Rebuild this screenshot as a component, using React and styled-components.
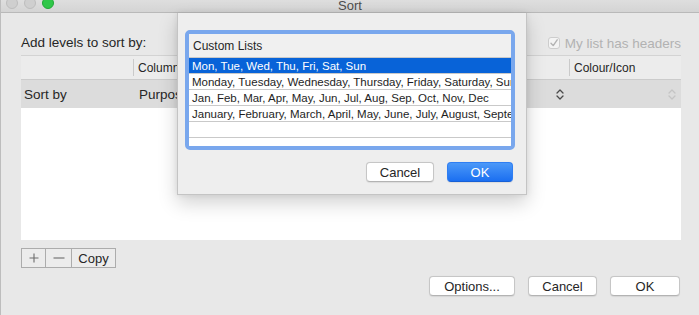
import React from 'react';
import styled, { createGlobalStyle } from 'styled-components';

const GlobalStyle = createGlobalStyle`
  * { box-sizing: border-box; }
  body {
    margin: 0;
    background: #e8e8e8;
    font-family: "Liberation Sans", Arial, sans-serif;
    color: #262626;
  }
`;

const Window = styled.div`
  position: relative;
  width: 699px;
  height: 315px;
  overflow: hidden;
  background: #e8e8e8;
  border-left: 1px solid #bdbdbd;
`;

const TitleBar = styled.div`
  height: 13px;
  display: grid;
  grid-template-columns: 1fr auto 1fr;
  align-items: start;
  background: linear-gradient(#dedede, #d4d4d4);
  border-bottom: 1px solid #b9b9b9;
  overflow: hidden;
`;

const Lights = styled.div`
  display: flex;
  gap: 6px;
  padding-left: 5px;
  margin-top: -3px;
`;

const Light = styled.span`
  width: 12px;
  height: 12px;
  border-radius: 50%;
  background: ${(p) => (p.green ? '#30c749' : '#cfcfcf')};
  border: 1px solid ${(p) => (p.green ? '#22a837' : '#bdbdbd')};
`;

const WindowTitle = styled.div`
  font-size: 13px;
  line-height: 12px;
  color: #4d4d4d;
`;

const Body = styled.div`
  padding: 0 18px 0 20px;
`;

const TopRow = styled.div`
  margin-top: 22px;
  height: 16px;
  display: flex;
  align-items: center;
  justify-content: space-between;
`;

const Label = styled.div`
  font-size: 13.5px;
  line-height: 16px;
  color: #262626;
`;

const CheckLabel = styled.label`
  display: flex;
  align-items: center;
  gap: 5px;
  font-size: 13.5px;
  color: #b2b2b2;
`;

const CheckBox = styled.span`
  width: 12px;
  height: 12px;
  border-radius: 3px;
  border: 1px solid #cdcdcd;
  background: #f4f4f4;
  display: flex;
  align-items: center;
  justify-content: center;
`;

const Table = styled.div`
  margin-top: 4px;
  border-top: 1px solid #d3d3d3;
`;

const Columns = styled.div`
  display: grid;
  grid-template-columns: 112px 145px 145px 146px 112px;
`;

const HeaderRow = styled(Columns)`
  height: 24px;
  background: #ececec;
  border-bottom: 1px solid #cbcbcb;
`;

const HeaderCell = styled.div`
  display: flex;
  align-items: center;
  font-size: 12px;
  color: #262626;
  padding-left: 4px;
  margin: 3px 0;
  border-left: ${(p) => (p.first ? 'none' : '1px solid #cacaca')};
`;

const SortRow = styled(Columns)`
  height: 28px;
  background: #dcdcdc;
`;

const Cell = styled.div`
  display: flex;
  align-items: center;
  justify-content: ${(p) => (p.end ? 'flex-end' : 'space-between')};
  padding: 0 5px 0 ${(p) => p.pad || 6}px;
  font-size: 13.5px;
  color: #262626;
`;

const TableBody = styled.div`
  height: 132px;
  background: #ffffff;
`;

const SmallGroup = styled.div`
  margin-top: 8px;
  display: inline-flex;
  height: 20px;
  border: 1px solid #acacac;
  background: #ececec;
`;

const SmallButton = styled.button`
  width: ${(p) => p.w}px;
  height: 100%;
  padding: 0;
  border: none;
  border-left: ${(p) => (p.first ? 'none' : '1px solid #acacac')};
  background: transparent;
  font-family: inherit;
  font-size: 13px;
  color: #262626;
  display: flex;
  align-items: center;
  justify-content: center;
`;

const Footer = styled.div`
  margin-top: 8px;
  margin-right: 1px;
  display: flex;
  justify-content: flex-end;
  gap: 13px;
`;

const PushButton = styled.button`
  width: ${(p) => p.w}px;
  height: 20px;
  padding: 0;
  border-radius: 4px;
  font-family: inherit;
  font-size: 13px;
  color: ${(p) => (p.primary ? '#ffffff' : '#262626')};
  background: ${(p) => (p.primary ? 'linear-gradient(#4b98f8, #1b6ff1)' : '#ffffff')};
  border: 1px solid ${(p) => (p.primary ? '#2f7ef2' : '#c6c6c6')};
  border-bottom-color: ${(p) => (p.primary ? '#1760d6' : '#b3b3b3')};
  box-shadow: 0 0.5px 1px rgba(0, 0, 0, 0.08);
`;

const Sheet = styled.div`
  position: absolute;
  top: 13px;
  left: 176px;
  width: 350px;
  background: #eeeeee;
  border: 1px solid #c4c4c4;
  border-top: none;
  padding: 17px 11px 12px 7px;
  box-shadow: 0 8px 18px rgba(0, 0, 0, 0.18), 0 0 6px rgba(0, 0, 0, 0.08);
`;

const ListFrame = styled.div`
  height: 120px;
  border: 4px solid #79a7ed;
  border-radius: 5px;
  background: #ffffff;
  overflow: hidden;
`;

const ListHeader = styled.div`
  height: 24px;
  padding-left: 4px;
  display: flex;
  align-items: center;
  font-size: 12px;
  color: #262626;
  background: #f0f0f0;
  border-bottom: 1px solid #c9c9c9;
`;

const ListRow = styled.div`
  height: 16px;
  padding-left: 3px;
  display: flex;
  align-items: center;
  font-size: 11.5px;
  white-space: nowrap;
  overflow: hidden;
  color: ${(p) => (p.selected ? '#ffffff' : '#1e1e1e')};
  background: ${(p) => (p.selected ? '#0863d8' : '#ffffff')};
  border-bottom: 1px solid #c9c9c9;
`;

const SheetButtons = styled.div`
  margin-top: 12px;
  padding-right: 2px;
  display: flex;
  justify-content: flex-end;
  gap: 13px;
`;

const Chevrons = ({ disabled }) => (
  <svg width="8" height="11" viewBox="0 0 8 11" fill="none"
    stroke={disabled ? '#c4c4c4' : '#4a4a4a'} strokeWidth="1.3"
    strokeLinecap="round" strokeLinejoin="round">
    <path d="M1 4 L4 1 L7 4" />
    <path d="M1 7 L4 10 L7 7" />
  </svg>
);

const Check = () => (
  <svg width="10" height="10" viewBox="0 0 10 10" fill="none"
    stroke="#b3b3b3" strokeWidth="1.4" strokeLinecap="round" strokeLinejoin="round">
    <path d="M2 5.2 L4.2 7.6 L8.2 1.8" />
  </svg>
);

const Plus = () => (
  <svg width="10" height="10" viewBox="0 0 10 10" stroke="#6c6c6c" strokeWidth="1.1">
    <path d="M5 0.5 V9.5 M0.5 5 H9.5" />
  </svg>
);

const Minus = () => (
  <svg width="12" height="10" viewBox="0 0 12 10" stroke="#6c6c6c" strokeWidth="1.1">
    <path d="M0.5 5 H11.5" />
  </svg>
);

const lists = [
  'Mon, Tue, Wed, Thu, Fri, Sat, Sun',
  'Monday, Tuesday, Wednesday, Thursday, Friday, Saturday, Sunday',
  'Jan, Feb, Mar, Apr, May, Jun, Jul, Aug, Sep, Oct, Nov, Dec',
  'January, February, March, April, May, June, July, August, September, October, November, December',
  '',
  '',
];

export default function App() {
  return (
    <>
      <GlobalStyle />
      <Window>
        <TitleBar>
          <Lights>
            <Light />
            <Light />
            <Light green />
          </Lights>
          <WindowTitle>Sort</WindowTitle>
          <div />
        </TitleBar>

        <Body>
          <TopRow>
            <Label>Add levels to sort by:</Label>
            <CheckLabel>
              <CheckBox><Check /></CheckBox>
              My list has headers
            </CheckLabel>
          </TopRow>

          <Table>
            {/* the middle columns lie under the sheet */}
            <HeaderRow>
              <HeaderCell first />
              <HeaderCell>Column</HeaderCell>
              <HeaderCell />
              <HeaderCell />
              <HeaderCell>Colour/Icon</HeaderCell>
            </HeaderRow>
            <SortRow>
              <Cell pad={3}>Sort by</Cell>
              <Cell>Purpose</Cell>
              <Cell />
              <Cell end><Chevrons /></Cell>
              <Cell end><Chevrons disabled /></Cell>
            </SortRow>
            <TableBody />
          </Table>

          <SmallGroup>
            <SmallButton first w={23}><Plus /></SmallButton>
            <SmallButton w={26}><Minus /></SmallButton>
            <SmallButton w={44}>Copy</SmallButton>
          </SmallGroup>

          <Footer>
            <PushButton w={86}>Options...</PushButton>
            <PushButton w={69}>Cancel</PushButton>
            <PushButton w={70}>OK</PushButton>
          </Footer>
        </Body>

        <Sheet>
          <ListFrame>
            <ListHeader>Custom Lists</ListHeader>
            {lists.map((text, i) => (
              <ListRow key={i} selected={i === 0}>{text}</ListRow>
            ))}
          </ListFrame>
          <SheetButtons>
            <PushButton w={68}>Cancel</PushButton>
            <PushButton primary w={66}>OK</PushButton>
          </SheetButtons>
        </Sheet>
      </Window>
    </>
  );
}
